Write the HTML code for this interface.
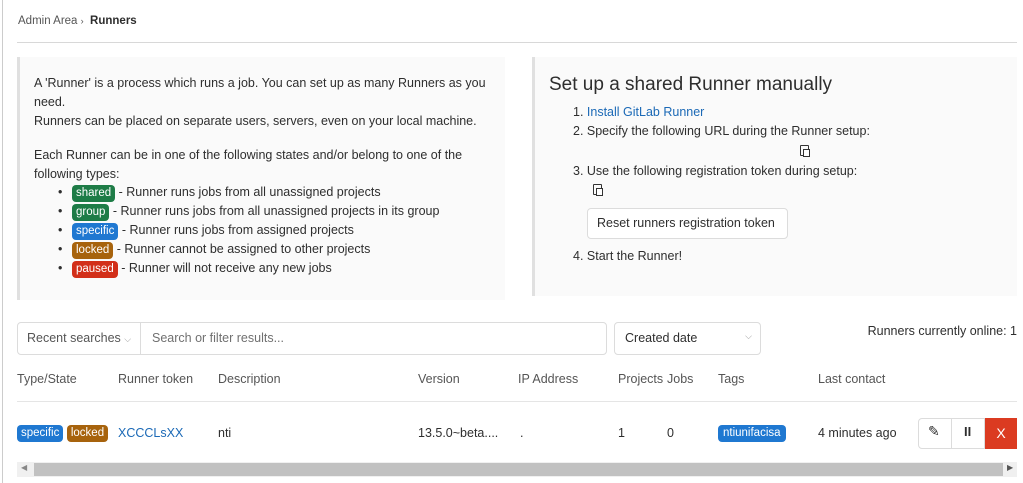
<!DOCTYPE html>
<html><head><meta charset="utf-8"><style>
*{box-sizing:border-box}
body{margin:0;width:1023px;height:483px;overflow:hidden;background:#fff;font-family:"Liberation Sans",sans-serif;font-size:12.5px;color:#2e2e2e;position:relative}
.a{position:absolute;white-space:nowrap}
.b{display:inline-block;color:#fff;border-radius:4px;padding:1px 4px;font-size:11.5px;line-height:15px}
.g{background:#1e7c47}.bl{background:#1f78d1}.o{background:#a7630d}.r{background:#d22f19}
.box{position:absolute;background:#fafafa;border-left:3px solid #e0e0e0}
.li{position:absolute;left:52px;white-space:nowrap}
.li:before{content:"•";position:absolute;left:-14px}
.clip{display:inline-block;width:9px;height:11px;border:1.5px solid #333;border-radius:1px;position:relative}
.clip:after{content:"";position:absolute;left:2px;top:3px;width:5px;height:6px;border:1.5px solid #333;background:#fff}
.h{color:#555}
</style></head><body>
<div style="position:absolute;left:2px;top:0;width:1px;height:483px;background:#ccc"></div>
<div class="a" style="left:18px;top:15px;font-size:11.5px;color:#555">Admin Area <span style="font-size:9px">›</span>&nbsp; <b style="color:#2e2e2e;font-weight:600">Runners</b></div>
<div style="position:absolute;left:17px;top:42px;width:1000px;height:1px;background:#d8d8d8"></div>

<div class="box" style="left:17px;top:57px;width:488px;height:243px">
<div class="a" style="left:14px;top:17px;line-height:19px;white-space:normal;width:460px">A 'Runner' is a process which runs a job. You can set up as many Runners as you need.<br>Runners can be placed on separate users, servers, even on your local machine.</div>
<div class="a" style="left:14px;top:89px;line-height:19px;white-space:normal;width:460px">Each Runner can be in one of the following states and/or belong to one of the following types:</div>
<div class="li" style="top:128px"><span class="b g">shared</span> - Runner runs jobs from all unassigned projects</div>
<div class="li" style="top:147px"><span class="b g">group</span> - Runner runs jobs from all unassigned projects in its group</div>
<div class="li" style="top:166px"><span class="b bl">specific</span> - Runner runs jobs from assigned projects</div>
<div class="li" style="top:185px"><span class="b o">locked</span> - Runner cannot be assigned to other projects</div>
<div class="li" style="top:204px"><span class="b r">paused</span> - Runner will not receive any new jobs</div>
</div>

<div class="box" style="left:532px;top:57px;width:485px;height:239px">
<div class="a" style="left:14px;top:17px;font-size:19px">Set up a shared Runner manually</div>
<div class="a" style="left:38px;top:48px">1. <span style="color:#1b69b6">Install GitLab Runner</span></div>
<div class="a" style="left:38px;top:67px">2. Specify the following URL during the Runner setup:</div>
<div class="a" style="left:265px;top:88px"><span class="clip"></span></div>
<div class="a" style="left:38px;top:107px">3. Use the following registration token during setup:</div>
<div class="a" style="left:58px;top:127px"><span class="clip"></span></div>
<div class="a" style="left:52px;top:151px;width:201px;height:31px;border:1px solid #dcdcdc;border-radius:4px;background:#fff;padding:7px 9px">Reset runners registration token</div>
<div class="a" style="left:38px;top:192px">4. Start the Runner!</div>
</div>

<div class="a" style="left:17px;top:322px;width:590px;height:33px;border:1px solid #dcdcdc;border-radius:4px"></div>
<div class="a" style="left:140px;top:322px;width:1px;height:33px;background:#dcdcdc"></div>
<div class="a h" style="left:27px;top:331px">Recent searches <span style="font-size:9px;color:#999">⌵</span></div>
<div class="a" style="left:152px;top:331px;color:#707070">Search or filter results...</div>
<div class="a" style="left:614px;top:322px;width:147px;height:33px;border:1px solid #dcdcdc;border-radius:4px;padding:8px 10px">Created date<span style="position:absolute;right:8px;color:#999;font-size:9px">⌵</span></div>
<div class="a" style="right:6px;top:324px">Runners currently online: 1</div>

<div class="a h" style="left:17px;top:372px">Type/State</div>
<div class="a h" style="left:118px;top:372px">Runner token</div>
<div class="a h" style="left:218px;top:372px">Description</div>
<div class="a h" style="left:418px;top:372px">Version</div>
<div class="a h" style="left:518px;top:372px">IP Address</div>
<div class="a h" style="left:618px;top:372px">Projects</div>
<div class="a h" style="left:667px;top:372px">Jobs</div>
<div class="a h" style="left:718px;top:372px">Tags</div>
<div class="a h" style="left:818px;top:372px">Last contact</div>
<div style="position:absolute;left:17px;top:401px;width:1000px;height:1px;background:#e5e5e5"></div>

<div class="a" style="left:17px;top:425px"><span class="b bl">specific</span> <span class="b o">locked</span></div>
<div class="a" style="left:118px;top:426px;color:#1b69b6">XCCCLsXX</div>
<div class="a" style="left:218px;top:426px">nti</div>
<div class="a" style="left:418px;top:426px">13.5.0~beta....</div>
<div class="a" style="left:520px;top:426px">.</div>
<div class="a" style="left:618px;top:426px">1</div>
<div class="a" style="left:667px;top:426px">0</div>
<div class="a" style="left:718px;top:425px"><span class="b bl" style="padding:1px 5px">ntiunifacisa</span></div>
<div class="a" style="left:818px;top:426px">4 minutes ago</div>
<div class="a" style="left:918px;top:418px;width:67px;height:31px;border:1px solid #dcdcdc;border-radius:4px 0 0 4px"></div>
<div class="a" style="left:951px;top:418px;width:1px;height:31px;background:#dcdcdc"></div>
<div class="a" style="left:928px;top:423px;font-size:14px">✎</div>
<div class="a" style="left:964px;top:424px;font-weight:bold;font-size:13px">II</div>
<div class="a" style="left:985px;top:418px;width:32px;height:31px;background:#db3b21;color:#fff;text-align:center;line-height:31px;font-size:14px">X</div>

<div class="a" style="left:17px;top:462px;width:1000px;height:15px;background:#f0f0f0"></div>
<div class="a" style="left:34px;top:463px;width:969px;height:13px;background:#c1c1c1"></div>
<div class="a" style="left:21px;top:463px;font-size:8px;color:#888">◀</div>
<div class="a" style="left:1007px;top:463px;font-size:8px;color:#555">▶</div>
</body></html>
